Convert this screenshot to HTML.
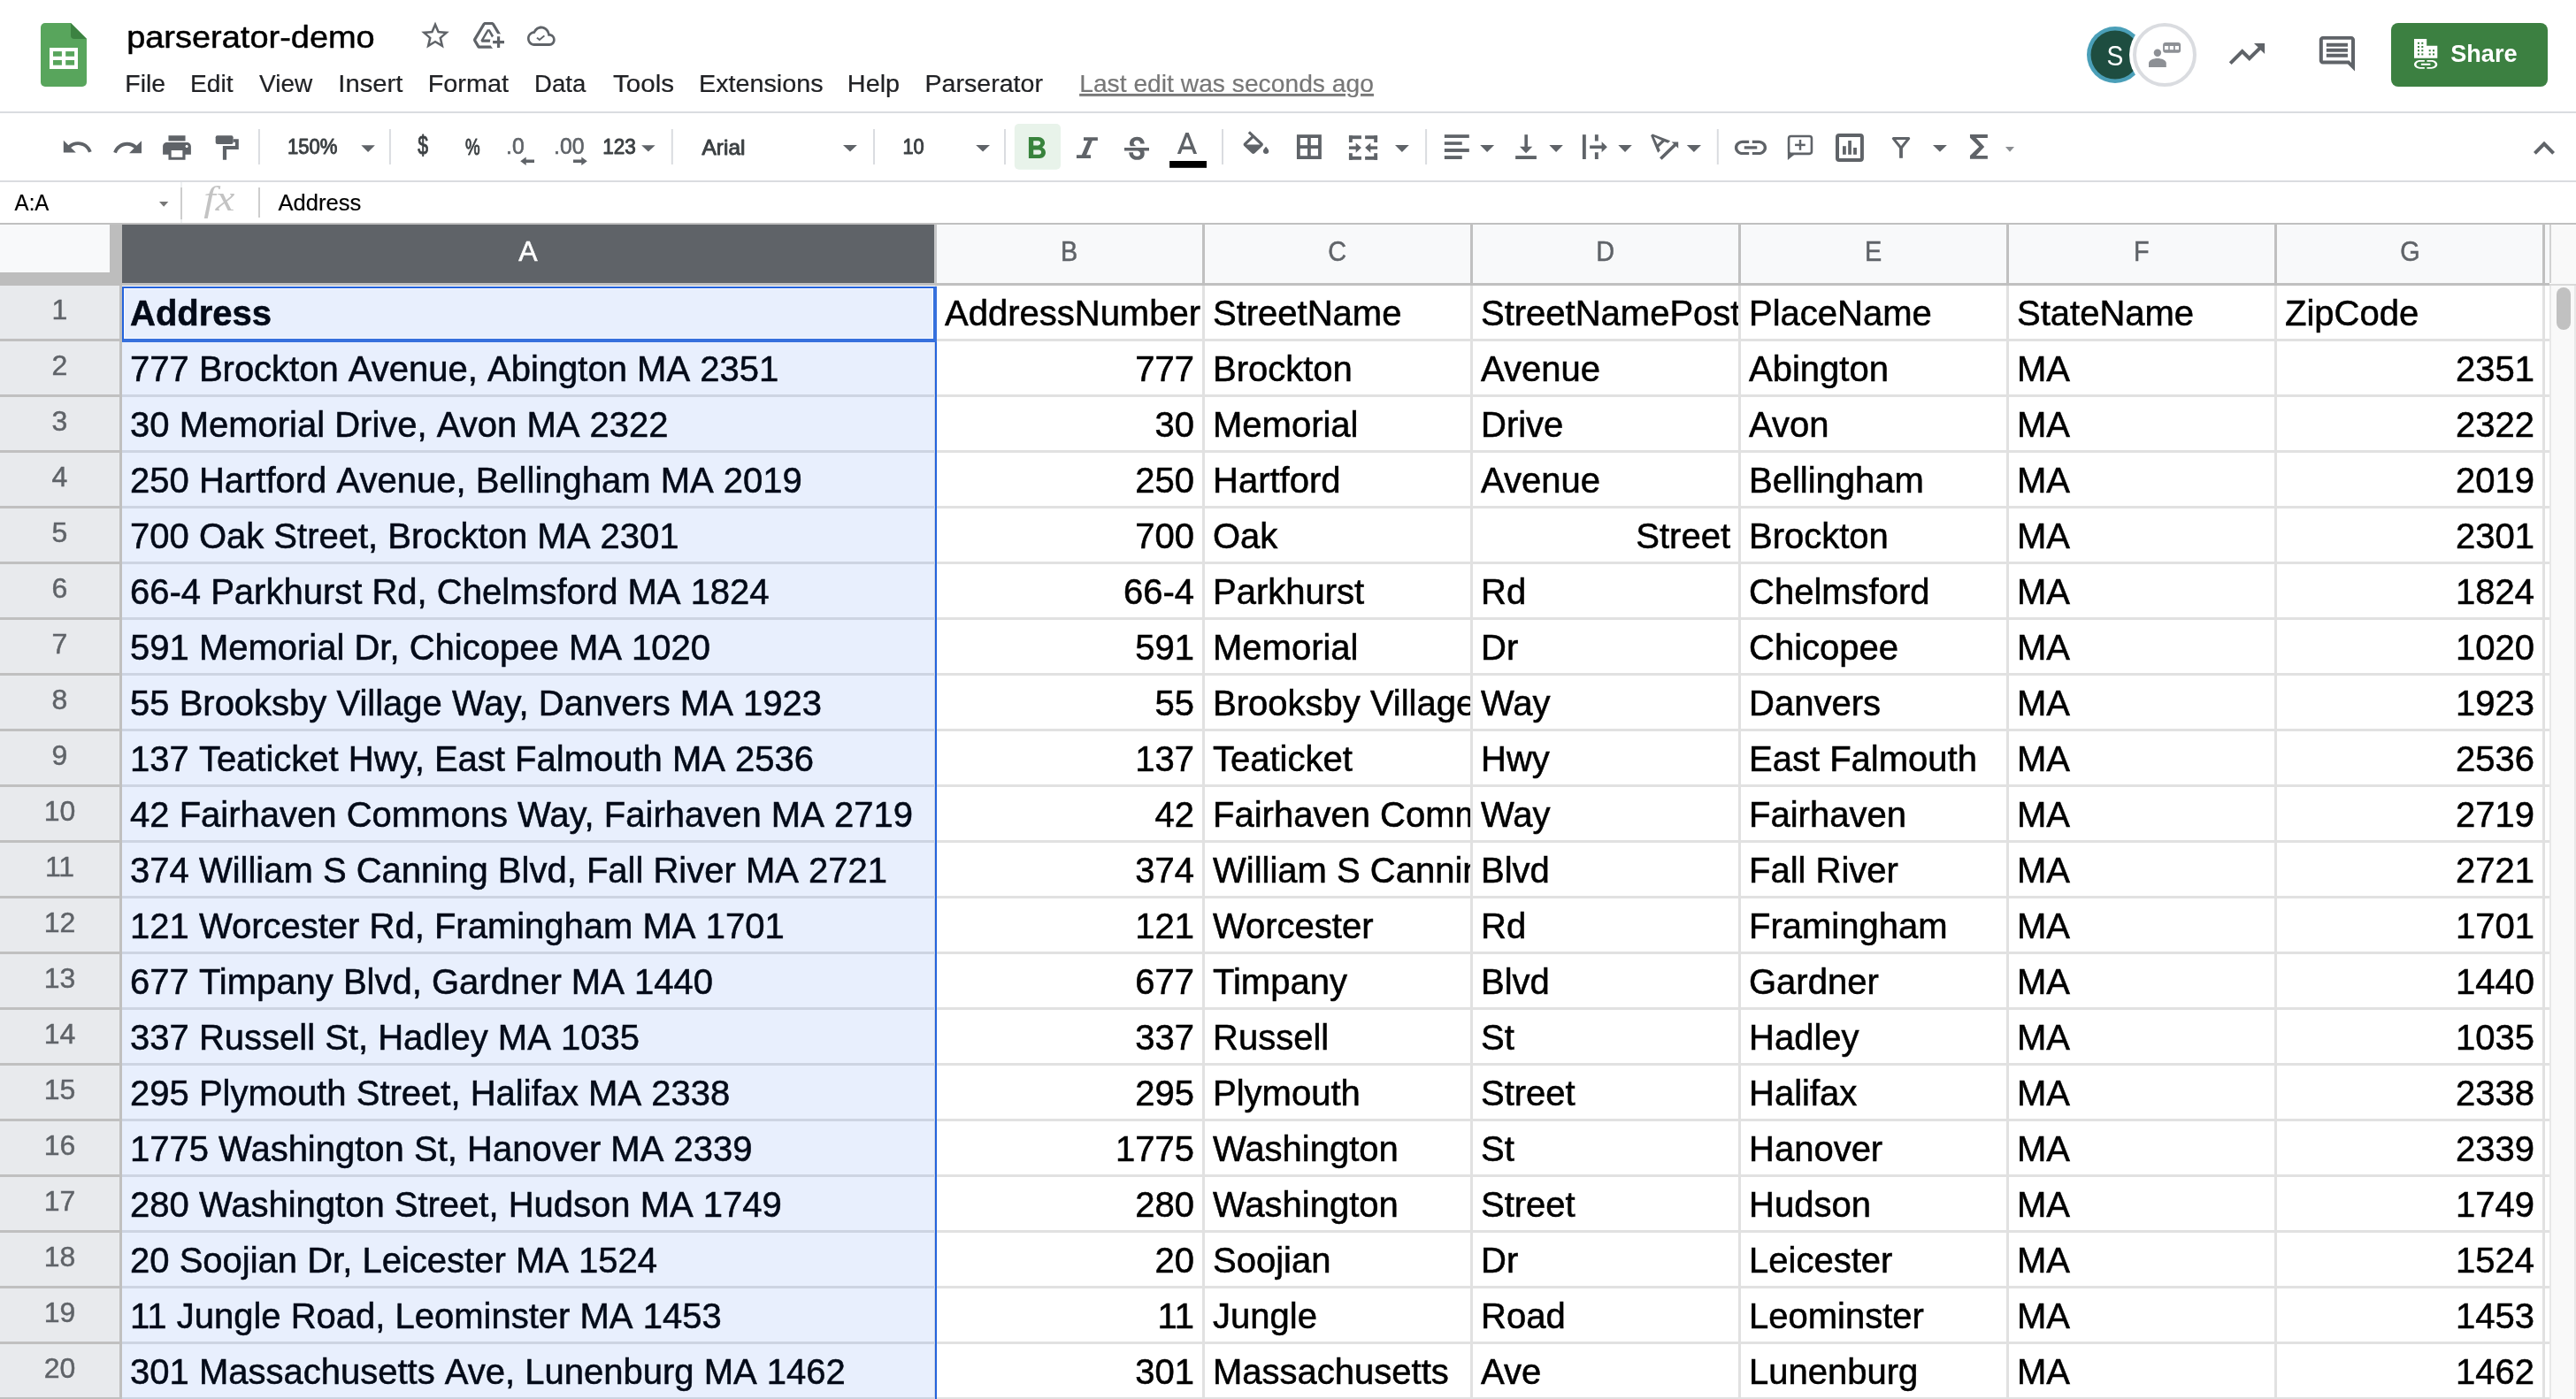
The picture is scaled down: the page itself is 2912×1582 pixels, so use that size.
<!DOCTYPE html>
<html lang="en"><head><meta charset="utf-8"><title>parserator-demo - Google Sheets</title>
<style>
*{box-sizing:border-box;margin:0;padding:0}
html,body{width:2912px;height:1582px;overflow:hidden;background:#fff}
body{position:relative;font-family:"Liberation Sans", Arial, sans-serif;color:#000}
.abs,.c,.rh,.ch,.vl,.hl{position:absolute}
.c{-webkit-text-stroke:0.55px #000;height:63px;line-height:63px;font-size:40px;white-space:nowrap;overflow:hidden;padding:0 9px;color:#000}
.c.r{text-align:right}
.c i{font-kerning:none;font-style:normal}
.c.b{font-weight:bold}
.rh{-webkit-text-stroke:0.45px;left:0;width:135px;height:60px;background:#e8eaed;color:#5f6368;font-size:32px;text-align:center;line-height:55px}
.ch span{display:inline-block;transform:scaleX(.9)}
.ch{-webkit-text-stroke:0.5px;top:254px;height:66px;background:#f8f9fa;color:#5f6368;font-size:32px;text-align:center;line-height:61px}
.vl{width:3px;background:#e1e1e1}
.hl{height:3px;background:#e1e1e1}
#chrome{position:absolute;left:0;top:0;will-change:transform}
#grid{position:absolute;left:0;top:0;width:2912px;height:1582px;will-change:transform}
</style></head><body>
<div id="grid">
<div class="abs" style="left:0;top:252px;width:2912px;height:2px;background:#c0c0c0"></div>
<div class="ch" style="left:138px;width:918px;background:#5f6368;color:#fff;">A</div>
<div class="abs" style="left:1056px;top:254px;width:3px;height:69px;background:#c6c7c9"></div>
<div class="ch" style="left:1059px;width:300px;"><span>B</span></div>
<div class="abs" style="left:1359px;top:254px;width:3px;height:69px;background:#c0c0c0"></div>
<div class="ch" style="left:1362px;width:300px;"><span>C</span></div>
<div class="abs" style="left:1662px;top:254px;width:3px;height:69px;background:#c0c0c0"></div>
<div class="ch" style="left:1665px;width:300px;"><span>D</span></div>
<div class="abs" style="left:1965px;top:254px;width:3px;height:69px;background:#c0c0c0"></div>
<div class="ch" style="left:1968px;width:300px;"><span>E</span></div>
<div class="abs" style="left:2268px;top:254px;width:3px;height:69px;background:#c0c0c0"></div>
<div class="ch" style="left:2271px;width:300px;"><span>F</span></div>
<div class="abs" style="left:2571px;top:254px;width:3px;height:69px;background:#c0c0c0"></div>
<div class="ch" style="left:2574px;width:300px;"><span>G</span></div>
<div class="abs" style="left:2874px;top:254px;width:3px;height:69px;background:#c0c0c0"></div>
<div class="abs" style="left:2877px;top:254px;width:5px;height:66px;background:#f8f9fa"></div>
<div class="abs" style="left:0;top:320px;width:2882px;height:3px;background:#c0c0c0"></div>
<div class="abs" style="left:0;top:254px;width:138px;height:69px;background:#bdbdbd"></div>
<div class="abs" style="left:0;top:254px;width:124px;height:54px;background:#f8f9fa"></div>
<div class="rh" style="top:323px">1</div>
<div class="abs" style="left:0;top:383px;width:135px;height:3px;background:#c0c0c0"></div>
<div class="rh" style="top:386px">2</div>
<div class="abs" style="left:0;top:446px;width:135px;height:3px;background:#c0c0c0"></div>
<div class="rh" style="top:449px">3</div>
<div class="abs" style="left:0;top:509px;width:135px;height:3px;background:#c0c0c0"></div>
<div class="rh" style="top:512px">4</div>
<div class="abs" style="left:0;top:572px;width:135px;height:3px;background:#c0c0c0"></div>
<div class="rh" style="top:575px">5</div>
<div class="abs" style="left:0;top:635px;width:135px;height:3px;background:#c0c0c0"></div>
<div class="rh" style="top:638px">6</div>
<div class="abs" style="left:0;top:698px;width:135px;height:3px;background:#c0c0c0"></div>
<div class="rh" style="top:701px">7</div>
<div class="abs" style="left:0;top:761px;width:135px;height:3px;background:#c0c0c0"></div>
<div class="rh" style="top:764px">8</div>
<div class="abs" style="left:0;top:824px;width:135px;height:3px;background:#c0c0c0"></div>
<div class="rh" style="top:827px">9</div>
<div class="abs" style="left:0;top:887px;width:135px;height:3px;background:#c0c0c0"></div>
<div class="rh" style="top:890px">10</div>
<div class="abs" style="left:0;top:950px;width:135px;height:3px;background:#c0c0c0"></div>
<div class="rh" style="top:953px">11</div>
<div class="abs" style="left:0;top:1013px;width:135px;height:3px;background:#c0c0c0"></div>
<div class="rh" style="top:1016px">12</div>
<div class="abs" style="left:0;top:1076px;width:135px;height:3px;background:#c0c0c0"></div>
<div class="rh" style="top:1079px">13</div>
<div class="abs" style="left:0;top:1139px;width:135px;height:3px;background:#c0c0c0"></div>
<div class="rh" style="top:1142px">14</div>
<div class="abs" style="left:0;top:1202px;width:135px;height:3px;background:#c0c0c0"></div>
<div class="rh" style="top:1205px">15</div>
<div class="abs" style="left:0;top:1265px;width:135px;height:3px;background:#c0c0c0"></div>
<div class="rh" style="top:1268px">16</div>
<div class="abs" style="left:0;top:1328px;width:135px;height:3px;background:#c0c0c0"></div>
<div class="rh" style="top:1331px">17</div>
<div class="abs" style="left:0;top:1391px;width:135px;height:3px;background:#c0c0c0"></div>
<div class="rh" style="top:1394px">18</div>
<div class="abs" style="left:0;top:1454px;width:135px;height:3px;background:#c0c0c0"></div>
<div class="rh" style="top:1457px">19</div>
<div class="abs" style="left:0;top:1517px;width:135px;height:3px;background:#c0c0c0"></div>
<div class="rh" style="top:1520px">20</div>
<div class="abs" style="left:0;top:1580px;width:135px;height:3px;background:#c0c0c0"></div>
<div class="abs" style="left:135px;top:323px;width:3px;height:1259px;background:#c0c0c0"></div>
<div class="hl" style="left:138px;top:383px;width:2744px"></div>
<div class="hl" style="left:138px;top:446px;width:2744px"></div>
<div class="hl" style="left:138px;top:509px;width:2744px"></div>
<div class="hl" style="left:138px;top:572px;width:2744px"></div>
<div class="hl" style="left:138px;top:635px;width:2744px"></div>
<div class="hl" style="left:138px;top:698px;width:2744px"></div>
<div class="hl" style="left:138px;top:761px;width:2744px"></div>
<div class="hl" style="left:138px;top:824px;width:2744px"></div>
<div class="hl" style="left:138px;top:887px;width:2744px"></div>
<div class="hl" style="left:138px;top:950px;width:2744px"></div>
<div class="hl" style="left:138px;top:1013px;width:2744px"></div>
<div class="hl" style="left:138px;top:1076px;width:2744px"></div>
<div class="hl" style="left:138px;top:1139px;width:2744px"></div>
<div class="hl" style="left:138px;top:1202px;width:2744px"></div>
<div class="hl" style="left:138px;top:1265px;width:2744px"></div>
<div class="hl" style="left:138px;top:1328px;width:2744px"></div>
<div class="hl" style="left:138px;top:1391px;width:2744px"></div>
<div class="hl" style="left:138px;top:1454px;width:2744px"></div>
<div class="hl" style="left:138px;top:1517px;width:2744px"></div>
<div class="hl" style="left:138px;top:1580px;width:2744px"></div>
<div class="vl" style="left:1056px;top:323px;height:1259px"></div>
<div class="vl" style="left:1359px;top:323px;height:1259px"></div>
<div class="vl" style="left:1662px;top:323px;height:1259px"></div>
<div class="vl" style="left:1965px;top:323px;height:1259px"></div>
<div class="vl" style="left:2268px;top:323px;height:1259px"></div>
<div class="vl" style="left:2571px;top:323px;height:1259px"></div>
<div class="vl" style="left:2874px;top:323px;height:1259px"></div>
<div class="c b" style="left:138px;top:323px;width:918px">Address</div>
<div class="c" style="left:1059px;top:323px;width:300px">AddressNumber</div>
<div class="c" style="left:1362px;top:323px;width:300px">StreetName</div>
<div class="c" style="left:1665px;top:323px;width:300px">StreetNamePostType</div>
<div class="c" style="left:1968px;top:323px;width:300px">PlaceName</div>
<div class="c" style="left:2271px;top:323px;width:300px">StateName</div>
<div class="c" style="left:2574px;top:323px;width:300px">ZipCode</div>
<div class="c" style="left:138px;top:386px;width:918px">777<i> </i>Brockton<i> </i>Avenue,<i> </i>Abington<i> </i>MA<i> </i>2351</div>
<div class="c r" style="left:1059px;top:386px;width:300px">777</div>
<div class="c" style="left:1362px;top:386px;width:300px">Brockton</div>
<div class="c" style="left:1665px;top:386px;width:300px">Avenue</div>
<div class="c" style="left:1968px;top:386px;width:300px">Abington</div>
<div class="c" style="left:2271px;top:386px;width:300px">MA</div>
<div class="c r" style="left:2574px;top:386px;width:300px">2351</div>
<div class="c" style="left:138px;top:449px;width:918px">30<i> </i>Memorial<i> </i>Drive,<i> </i>Avon<i> </i>MA<i> </i>2322</div>
<div class="c r" style="left:1059px;top:449px;width:300px">30</div>
<div class="c" style="left:1362px;top:449px;width:300px">Memorial</div>
<div class="c" style="left:1665px;top:449px;width:300px">Drive</div>
<div class="c" style="left:1968px;top:449px;width:300px">Avon</div>
<div class="c" style="left:2271px;top:449px;width:300px">MA</div>
<div class="c r" style="left:2574px;top:449px;width:300px">2322</div>
<div class="c" style="left:138px;top:512px;width:918px">250<i> </i>Hartford<i> </i>Avenue,<i> </i>Bellingham<i> </i>MA<i> </i>2019</div>
<div class="c r" style="left:1059px;top:512px;width:300px">250</div>
<div class="c" style="left:1362px;top:512px;width:300px">Hartford</div>
<div class="c" style="left:1665px;top:512px;width:300px">Avenue</div>
<div class="c" style="left:1968px;top:512px;width:300px">Bellingham</div>
<div class="c" style="left:2271px;top:512px;width:300px">MA</div>
<div class="c r" style="left:2574px;top:512px;width:300px">2019</div>
<div class="c" style="left:138px;top:575px;width:918px">700<i> </i>Oak<i> </i>Street,<i> </i>Brockton<i> </i>MA<i> </i>2301</div>
<div class="c r" style="left:1059px;top:575px;width:300px">700</div>
<div class="c" style="left:1362px;top:575px;width:300px">Oak</div>
<div class="c r" style="left:1665px;top:575px;width:300px">Street</div>
<div class="c" style="left:1968px;top:575px;width:300px">Brockton</div>
<div class="c" style="left:2271px;top:575px;width:300px">MA</div>
<div class="c r" style="left:2574px;top:575px;width:300px">2301</div>
<div class="c" style="left:138px;top:638px;width:918px">66-4<i> </i>Parkhurst<i> </i>Rd,<i> </i>Chelmsford<i> </i>MA<i> </i>1824</div>
<div class="c r" style="left:1059px;top:638px;width:300px">66-4</div>
<div class="c" style="left:1362px;top:638px;width:300px">Parkhurst</div>
<div class="c" style="left:1665px;top:638px;width:300px">Rd</div>
<div class="c" style="left:1968px;top:638px;width:300px">Chelmsford</div>
<div class="c" style="left:2271px;top:638px;width:300px">MA</div>
<div class="c r" style="left:2574px;top:638px;width:300px">1824</div>
<div class="c" style="left:138px;top:701px;width:918px">591<i> </i>Memorial<i> </i>Dr,<i> </i>Chicopee<i> </i>MA<i> </i>1020</div>
<div class="c r" style="left:1059px;top:701px;width:300px">591</div>
<div class="c" style="left:1362px;top:701px;width:300px">Memorial</div>
<div class="c" style="left:1665px;top:701px;width:300px">Dr</div>
<div class="c" style="left:1968px;top:701px;width:300px">Chicopee</div>
<div class="c" style="left:2271px;top:701px;width:300px">MA</div>
<div class="c r" style="left:2574px;top:701px;width:300px">1020</div>
<div class="c" style="left:138px;top:764px;width:918px">55<i> </i>Brooksby<i> </i>Village<i> </i>Way,<i> </i>Danvers<i> </i>MA<i> </i>1923</div>
<div class="c r" style="left:1059px;top:764px;width:300px">55</div>
<div class="c" style="left:1362px;top:764px;width:300px">Brooksby<i> </i>Village</div>
<div class="c" style="left:1665px;top:764px;width:300px">Way</div>
<div class="c" style="left:1968px;top:764px;width:300px">Danvers</div>
<div class="c" style="left:2271px;top:764px;width:300px">MA</div>
<div class="c r" style="left:2574px;top:764px;width:300px">1923</div>
<div class="c" style="left:138px;top:827px;width:918px">137<i> </i>Teaticket<i> </i>Hwy,<i> </i>East<i> </i>Falmouth<i> </i>MA<i> </i>2536</div>
<div class="c r" style="left:1059px;top:827px;width:300px">137</div>
<div class="c" style="left:1362px;top:827px;width:300px">Teaticket</div>
<div class="c" style="left:1665px;top:827px;width:300px">Hwy</div>
<div class="c" style="left:1968px;top:827px;width:300px">East<i> </i>Falmouth</div>
<div class="c" style="left:2271px;top:827px;width:300px">MA</div>
<div class="c r" style="left:2574px;top:827px;width:300px">2536</div>
<div class="c" style="left:138px;top:890px;width:918px">42<i> </i>Fairhaven<i> </i>Commons<i> </i>Way,<i> </i>Fairhaven<i> </i>MA<i> </i>2719</div>
<div class="c r" style="left:1059px;top:890px;width:300px">42</div>
<div class="c" style="left:1362px;top:890px;width:300px">Fairhaven<i> </i>Commons</div>
<div class="c" style="left:1665px;top:890px;width:300px">Way</div>
<div class="c" style="left:1968px;top:890px;width:300px">Fairhaven</div>
<div class="c" style="left:2271px;top:890px;width:300px">MA</div>
<div class="c r" style="left:2574px;top:890px;width:300px">2719</div>
<div class="c" style="left:138px;top:953px;width:918px">374<i> </i>William<i> </i>S<i> </i>Canning<i> </i>Blvd,<i> </i>Fall<i> </i>River<i> </i>MA<i> </i>2721</div>
<div class="c r" style="left:1059px;top:953px;width:300px">374</div>
<div class="c" style="left:1362px;top:953px;width:300px">William<i> </i>S<i> </i>Canning</div>
<div class="c" style="left:1665px;top:953px;width:300px">Blvd</div>
<div class="c" style="left:1968px;top:953px;width:300px">Fall<i> </i>River</div>
<div class="c" style="left:2271px;top:953px;width:300px">MA</div>
<div class="c r" style="left:2574px;top:953px;width:300px">2721</div>
<div class="c" style="left:138px;top:1016px;width:918px">121<i> </i>Worcester<i> </i>Rd,<i> </i>Framingham<i> </i>MA<i> </i>1701</div>
<div class="c r" style="left:1059px;top:1016px;width:300px">121</div>
<div class="c" style="left:1362px;top:1016px;width:300px">Worcester</div>
<div class="c" style="left:1665px;top:1016px;width:300px">Rd</div>
<div class="c" style="left:1968px;top:1016px;width:300px">Framingham</div>
<div class="c" style="left:2271px;top:1016px;width:300px">MA</div>
<div class="c r" style="left:2574px;top:1016px;width:300px">1701</div>
<div class="c" style="left:138px;top:1079px;width:918px">677<i> </i>Timpany<i> </i>Blvd,<i> </i>Gardner<i> </i>MA<i> </i>1440</div>
<div class="c r" style="left:1059px;top:1079px;width:300px">677</div>
<div class="c" style="left:1362px;top:1079px;width:300px">Timpany</div>
<div class="c" style="left:1665px;top:1079px;width:300px">Blvd</div>
<div class="c" style="left:1968px;top:1079px;width:300px">Gardner</div>
<div class="c" style="left:2271px;top:1079px;width:300px">MA</div>
<div class="c r" style="left:2574px;top:1079px;width:300px">1440</div>
<div class="c" style="left:138px;top:1142px;width:918px">337<i> </i>Russell<i> </i>St,<i> </i>Hadley<i> </i>MA<i> </i>1035</div>
<div class="c r" style="left:1059px;top:1142px;width:300px">337</div>
<div class="c" style="left:1362px;top:1142px;width:300px">Russell</div>
<div class="c" style="left:1665px;top:1142px;width:300px">St</div>
<div class="c" style="left:1968px;top:1142px;width:300px">Hadley</div>
<div class="c" style="left:2271px;top:1142px;width:300px">MA</div>
<div class="c r" style="left:2574px;top:1142px;width:300px">1035</div>
<div class="c" style="left:138px;top:1205px;width:918px">295<i> </i>Plymouth<i> </i>Street,<i> </i>Halifax<i> </i>MA<i> </i>2338</div>
<div class="c r" style="left:1059px;top:1205px;width:300px">295</div>
<div class="c" style="left:1362px;top:1205px;width:300px">Plymouth</div>
<div class="c" style="left:1665px;top:1205px;width:300px">Street</div>
<div class="c" style="left:1968px;top:1205px;width:300px">Halifax</div>
<div class="c" style="left:2271px;top:1205px;width:300px">MA</div>
<div class="c r" style="left:2574px;top:1205px;width:300px">2338</div>
<div class="c" style="left:138px;top:1268px;width:918px">1775<i> </i>Washington<i> </i>St,<i> </i>Hanover<i> </i>MA<i> </i>2339</div>
<div class="c r" style="left:1059px;top:1268px;width:300px">1775</div>
<div class="c" style="left:1362px;top:1268px;width:300px">Washington</div>
<div class="c" style="left:1665px;top:1268px;width:300px">St</div>
<div class="c" style="left:1968px;top:1268px;width:300px">Hanover</div>
<div class="c" style="left:2271px;top:1268px;width:300px">MA</div>
<div class="c r" style="left:2574px;top:1268px;width:300px">2339</div>
<div class="c" style="left:138px;top:1331px;width:918px">280<i> </i>Washington<i> </i>Street,<i> </i>Hudson<i> </i>MA<i> </i>1749</div>
<div class="c r" style="left:1059px;top:1331px;width:300px">280</div>
<div class="c" style="left:1362px;top:1331px;width:300px">Washington</div>
<div class="c" style="left:1665px;top:1331px;width:300px">Street</div>
<div class="c" style="left:1968px;top:1331px;width:300px">Hudson</div>
<div class="c" style="left:2271px;top:1331px;width:300px">MA</div>
<div class="c r" style="left:2574px;top:1331px;width:300px">1749</div>
<div class="c" style="left:138px;top:1394px;width:918px">20<i> </i>Soojian<i> </i>Dr,<i> </i>Leicester<i> </i>MA<i> </i>1524</div>
<div class="c r" style="left:1059px;top:1394px;width:300px">20</div>
<div class="c" style="left:1362px;top:1394px;width:300px">Soojian</div>
<div class="c" style="left:1665px;top:1394px;width:300px">Dr</div>
<div class="c" style="left:1968px;top:1394px;width:300px">Leicester</div>
<div class="c" style="left:2271px;top:1394px;width:300px">MA</div>
<div class="c r" style="left:2574px;top:1394px;width:300px">1524</div>
<div class="c" style="left:138px;top:1457px;width:918px">11<i> </i>Jungle<i> </i>Road,<i> </i>Leominster<i> </i>MA<i> </i>1453</div>
<div class="c r" style="left:1059px;top:1457px;width:300px">11</div>
<div class="c" style="left:1362px;top:1457px;width:300px">Jungle</div>
<div class="c" style="left:1665px;top:1457px;width:300px">Road</div>
<div class="c" style="left:1968px;top:1457px;width:300px">Leominster</div>
<div class="c" style="left:2271px;top:1457px;width:300px">MA</div>
<div class="c r" style="left:2574px;top:1457px;width:300px">1453</div>
<div class="c" style="left:138px;top:1520px;width:918px">301<i> </i>Massachusetts<i> </i>Ave,<i> </i>Lunenburg<i> </i>MA<i> </i>1462</div>
<div class="c r" style="left:1059px;top:1520px;width:300px">301</div>
<div class="c" style="left:1362px;top:1520px;width:300px">Massachusetts</div>
<div class="c" style="left:1665px;top:1520px;width:300px">Ave</div>
<div class="c" style="left:1968px;top:1520px;width:300px">Lunenburg</div>
<div class="c" style="left:2271px;top:1520px;width:300px">MA</div>
<div class="c r" style="left:2574px;top:1520px;width:300px">1462</div>
<div class="abs" style="left:138px;top:323px;width:919px;height:1259px;background:rgba(25,95,235,0.1)"></div>
<div class="abs" style="left:1057px;top:324px;width:2px;height:1259px;background:#2463dc"></div>
<div class="abs" style="left:138px;top:324px;width:921px;height:63px;border:2px solid #2463dc;border-right-width:4px;border-bottom-width:4px;border-right-color:#3670dd;border-bottom-color:#3670dd;box-shadow:inset 0 0 0 1px rgba(255,255,255,.75)"></div>
<div class="abs" style="left:138px;top:323px;width:919px;height:1px;background:#fff"></div>
<div class="abs" style="left:2882px;top:254px;width:2px;height:66px;background:#d2d2d2"></div>
<div class="abs" style="left:2884px;top:254px;width:28px;height:67px;background:#f9f9f9"></div>
<div class="abs" style="left:2882px;top:321px;width:30px;height:2px;background:#d9d9d9"></div>
<div class="abs" style="left:2882px;top:323px;width:2px;height:1259px;background:#e8e8e8"></div>
<div class="abs" style="left:2884px;top:323px;width:26px;height:1259px;background:#f9f9f9"></div>
<div class="abs" style="left:2910px;top:323px;width:2px;height:1259px;background:#e8e8e8"></div>
<div class="abs" style="left:2890px;top:325px;width:16px;height:48px;border-radius:8px;background:#c1c1c1"></div>
</div>
<svg id="chrome" width="2912" height="252" viewBox="0 0 2912 252">
<rect x="0.00" y="0.00" width="2912.00" height="252.00" fill="#fff"/>
<rect x="0.00" y="126.00" width="2912.00" height="2.00" fill="#dadce0"/>
<rect x="0.00" y="204.00" width="2912.00" height="2.00" fill="#dadce0"/>
<g>
<path d="M51 26H80L98 44V93a5 5 0 0 1-5 5H51a5 5 0 0 1-5-5V31a5 5 0 0 1 5-5z" fill="#58a55c"/>
<path d="M80 26L98 44H84a4 4 0 0 1-4-4z" fill="#3c8241"/>
<rect x="56.00" y="54.00" width="32.00" height="24.00" fill="#fff"/>
<rect x="60.00" y="58.10" width="9.90" height="5.70" fill="#58a55c"/>
<rect x="60.00" y="68.00" width="9.90" height="5.70" fill="#58a55c"/>
<rect x="74.20" y="58.10" width="9.90" height="5.70" fill="#58a55c"/>
<rect x="74.20" y="68.00" width="9.90" height="5.70" fill="#58a55c"/>
</g>
<path transform="translate(473.040,21.232) scale(1.5800,1.5842)" fill="#5f6368" d="M22 9.24l-7.19-.62L12 2 9.19 8.63 2 9.24l5.46 4.73L5.82 21 12 17.27 18.18 21l-1.63-7.03L22 9.24zM12 15.4l-3.76 2.27 1-4.28-3.32-2.88 4.38-.38L12 6.1l1.71 4.04 4.38.38-3.32 2.88 1 4.28L12 15.4z" />
<path transform="translate(532.903,20.979) scale(1.6129,1.5684)" fill="#5f6368" d="M20 21v-3h3v-2h-3v-3h-2v3h-3v2h3v3h2zm-4.97.5H5.66c-.72 0-1.38-.38-1.73-1L1.57 16.4c-.36-.62-.35-1.38.01-2L7.92 3.49c.36-.61 1.02-.99 1.73-.99h4.7c.71 0 1.37.38 1.73.99l4.48 7.71c-.5-.13-1.02-.2-1.56-.2-.28 0-.56.02-.84.06L14.35 4.5h-4.7L3.31 15.41l2.35 4.09h7.89c.35.77.85 1.45 1.48 2zM13.34 15c-.22.63-.34 1.3-.34 2H7.25l-.73-1.27 4.58-7.98h1.8l2.74 4.77c-.5.36-.95.79-1.33 1.28L12 9.25 8.7 15h4.64z" />
<path transform="translate(596.000,24.025) scale(1.3208,1.3937)" fill="#5f6368" d="M19.35 10.04C18.67 6.59 15.64 4 12 4 9.11 4 6.6 5.64 5.35 8.04 2.34 8.36 0 10.91 0 14c0 3.31 2.69 6 6 6h13c2.76 0 5-2.24 5-5 0-2.64-2.05-4.78-4.65-4.96zM19 18H6c-2.21 0-4-1.79-4-4 0-2.05 1.53-3.76 3.56-3.97l1.07-.11.5-.95C8.08 7.14 9.94 6 12 6c2.62 0 4.88 1.86 5.39 4.43l.3 1.5 1.53.11c1.56.1 2.78 1.41 2.78 2.96 0 1.65-1.35 3-3 3z" />
<path transform="translate(599.602,31.408) scale(1.0305,0.8760)" fill="#5f6368" d="M10 14.18L7.91 12.09 6.5 13.5 10 17l6.01-6.01-1.41-1.41z" />
<path transform="translate(68.683,148.016) scale(1.5584,1.5263)" fill="#5f6368" d="M12.5 8c-2.65 0-5.05.99-6.9 2.6L2 7v9h9l-3.62-3.62c1.39-1.16 3.16-1.88 5.12-1.88 3.54 0 6.55 2.31 7.6 5.5l2.37-.78C21.08 11.03 17.15 8 12.5 8z" />
<path transform="translate(125.806,148.311) scale(1.5543,1.5556)" fill="#5f6368" d="M18.4 10.6C16.55 8.99 14.15 8 11.5 8c-4.65 0-8.58 3.03-9.96 7.22L3.9 16c1.05-3.19 4.05-5.5 7.6-5.5 1.95 0 3.73.72 5.12 1.88L13 16h9V7l-3.6 3.6z" />
<path transform="translate(180.920,148.717) scale(1.5900,1.5278)" fill="#5f6368" d="M19 8H5c-1.66 0-3 1.34-3 3v6h4v4h12v-4h4v-6c0-1.66-1.34-3-3-3zm-3 11H8v-5h8v5zm3-7c-.55 0-1-.45-1-1s.45-1 1-1 1 .45 1 1-.45 1-1 1zm-1-9H6v4h12V3z" />
<g fill="#5f6368">
<rect x="243.70" y="153.30" width="19.90" height="9.70" fill="#5f6368" rx="2"/>
<path d="M263.600 157.200H269.800V169H256.100V180.800H251.900V165H265.900V160.800H263.600z"/>
</g>
<rect x="291.90" y="146.00" width="2.00" height="40.00" fill="#dadce0"/>
<rect x="439.90" y="146.00" width="2.00" height="40.00" fill="#dadce0"/>
<rect x="758.80" y="146.00" width="2.00" height="40.00" fill="#dadce0"/>
<rect x="987.00" y="146.00" width="2.00" height="40.00" fill="#dadce0"/>
<rect x="1135.00" y="146.00" width="2.00" height="40.00" fill="#dadce0"/>
<rect x="1381.00" y="146.00" width="2.00" height="40.00" fill="#dadce0"/>
<rect x="1611.10" y="146.00" width="2.00" height="40.00" fill="#dadce0"/>
<rect x="1940.80" y="146.00" width="2.00" height="40.00" fill="#dadce0"/>
<path d="M408.30 164.20H423.90L416.10 171.90z" fill="#5f6368"/>
<path d="M588.200 182.250L594.700 177.400V180.500H604V184H594.700V187.100z" fill="#5f6368"/>
<path d="M663.800 182.250L657.300 177.400V180.500H648V184H657.300V187.100z" fill="#5f6368"/>
<path d="M725.10 164.20H740.70L732.90 171.60z" fill="#5f6368"/>
<path d="M953.00 163.90H968.90L960.95 171.60z" fill="#5f6368"/>
<path d="M1103.20 163.90H1119.00L1111.10 171.60z" fill="#5f6368"/>
<rect x="1146.80" y="140.10" width="52.20" height="51.70" fill="#e8f3ea" rx="5"/>
<path transform="translate(1150.463,148.143) scale(1.7767,1.7143)" fill="#38833c" d="M15.6 10.79c.97-.67 1.65-1.77 1.65-2.79 0-2.26-1.75-4-4-4H7v14h7.04c2.09 0 3.71-1.7 3.71-3.79 0-1.52-.86-2.82-2.15-3.42zM10 6.5h3c.83 0 1.5.67 1.5 1.5s-.67 1.5-1.5 1.5h-3v-3zm3.500 9H10v-3h3.500c.83 0 1.500.67 1.500 1.500s-.67 1.500-1.500 1.500z" />
<path fill="#5f6368" d="M1225.00 155.18L1240.89 155.18L1240.89 158.93L1234.82 158.93L1228.12 175.27L1233.04 175.27L1233.04 179.02L1216.96 179.02L1216.96 175.27L1222.77 175.27L1229.91 158.93L1225.00 158.93z"/>
<path transform="translate(1266.333,149.469) scale(1.5556,1.7438)" fill="#5f6368" d="M7.24 8.75c-.26-.48-.39-1.03-.39-1.67 0-.61.13-1.16.4-1.67.26-.5.63-.93 1.11-1.29.48-.35 1.05-.63 1.7-.83.66-.19 1.39-.29 2.18-.29.81 0 1.54.11 2.21.34.66.22 1.23.54 1.69.94.47.4.83.88 1.08 1.43.25.55.38 1.15.38 1.81h-3.01c0-.31-.05-.59-.15-.85-.09-.27-.24-.49-.44-.68-.2-.19-.45-.33-.75-.44-.3-.1-.66-.16-1.06-.16-.39 0-.74.04-1.03.13-.29.09-.53.21-.72.36-.19.16-.34.34-.44.55-.1.21-.15.43-.15.66 0 .48.25.88.74 1.21.38.25.77.48 1.41.7H7.39c-.05-.08-.11-.17-.15-.25zM21 12v-2H3v2h9.62c.18.07.4.14.55.2.37.17.66.34.87.51.21.17.35.36.43.57.07.2.11.43.11.69 0 .23-.05.45-.14.66-.09.2-.23.38-.42.53-.19.15-.42.26-.71.35-.29.08-.63.13-1.01.13-.43 0-.83-.04-1.18-.13s-.66-.23-.91-.42c-.25-.19-.45-.44-.59-.75-.14-.31-.25-.76-.25-1.21H6.4c0 .55.08 1.13.24 1.58.16.45.37.85.65 1.21.28.35.6.66.98.92.37.26.78.48 1.22.65.44.17.9.3 1.38.39.48.08.96.13 1.44.13.8 0 1.53-.09 2.18-.28s1.21-.45 1.67-.79c.46-.34.82-.77 1.07-1.27s.38-1.07.38-1.71c0-.6-.1-1.14-.31-1.61-.05-.11-.11-.23-.17-.33H21z" />
<path transform="translate(1321.365,144.836) scale(1.7154,1.7214)" fill="#5f6368" d="M11 3L5.5 17h2.25l1.120-3h6.250l1.120 3h2.250L13 3h-2zm-1.380 9L12 5.670 14.380 12H9.620z" />
<rect x="1322.10" y="182.00" width="41.90" height="7.80" fill="#000"/>
<path transform="translate(1400.817,148.300) scale(1.5944,1.5118)" fill="#5f6368" d="M16.56 8.94L7.62 0 6.21 1.41l2.38 2.38-5.15 5.15c-.59.59-.59 1.54 0 2.120l5.500 5.500c.29.29.68.44 1.060.44s.77-.15 1.060-.44l5.500-5.500c.59-.58.59-1.530 0-2.120zM5.210 10L10 5.210 14.790 10H5.210zM19 11.500s-2 2.170-2 3.500c0 1.100.9 2 2 2s2-.9 2-2c0-1.330-2-3.500-2-3.500z" />
<rect x="1467.850" y="154.100" width="24.100" height="24" fill="none" stroke="#5f6368" stroke-width="3.800"/>
<rect x="1478.00" y="154.00" width="3.80" height="24.00" fill="#5f6368"/>
<rect x="1467.00" y="164.20" width="25.00" height="3.80" fill="#5f6368"/>
<rect x="1524.94" y="153.29" width="13.98" height="3.88" fill="#5f6368"/>
<rect x="1524.94" y="153.29" width="3.88" height="7.76" fill="#5f6368"/>
<rect x="1543.11" y="153.29" width="13.98" height="3.88" fill="#5f6368"/>
<rect x="1553.20" y="153.29" width="3.88" height="7.76" fill="#5f6368"/>
<rect x="1524.94" y="173.17" width="3.88" height="7.61" fill="#5f6368"/>
<rect x="1524.94" y="176.89" width="13.98" height="3.88" fill="#5f6368"/>
<rect x="1553.20" y="173.17" width="3.88" height="7.61" fill="#5f6368"/>
<rect x="1543.11" y="176.89" width="13.98" height="3.88" fill="#5f6368"/>
<rect x="1524.94" y="165.40" width="10.09" height="3.42" fill="#5f6368"/>
<rect x="1547.14" y="165.40" width="9.94" height="3.42" fill="#5f6368"/>
<path fill="#5f6368" d="M1532.70 161.52L1538.91 167.11L1532.70 172.70z"/>
<path fill="#5f6368" d="M1549.32 161.52L1543.11 167.11L1549.32 172.70z"/>
<path d="M1577.00 163.90H1592.80L1584.90 171.90z" fill="#5f6368"/>
<rect x="1632.86" y="152.20" width="27.95" height="3.73" fill="#5f6368"/>
<rect x="1632.86" y="160.28" width="19.88" height="3.57" fill="#5f6368"/>
<rect x="1632.86" y="168.04" width="27.95" height="3.88" fill="#5f6368"/>
<rect x="1632.86" y="176.12" width="19.88" height="3.88" fill="#5f6368"/>
<path d="M1673.20 163.90H1689.10L1681.15 171.90z" fill="#5f6368"/>
<rect x="1723.39" y="152.20" width="3.57" height="15.84" fill="#5f6368"/>
<path fill="#5f6368" d="M1717.95 165.71L1732.24 165.71L1725.09 173.17z"/>
<rect x="1713.14" y="176.12" width="23.76" height="3.88" fill="#5f6368"/>
<path d="M1751.30 163.90H1766.90L1759.10 171.90z" fill="#5f6368"/>
<rect x="1788.91" y="152.20" width="3.88" height="27.80" fill="#5f6368"/>
<rect x="1802.89" y="152.20" width="3.88" height="7.30" fill="#5f6368"/>
<rect x="1802.89" y="172.24" width="3.88" height="7.76" fill="#5f6368"/>
<rect x="1797.14" y="164.47" width="15.84" height="3.57" fill="#5f6368"/>
<path fill="#5f6368" d="M1810.65 160.28L1816.86 166.18L1810.65 172.24z"/>
<path d="M1829.30 163.90H1844.80L1837.05 171.90z" fill="#5f6368"/>
<path transform="translate(1859.876,144.178) scale(1.8145,1.7391)" fill="#5f6368" d="M4.49 4.21L3.43 5.27 7.85 16.4l1.48-1.48-.92-2.19 3.54-3.54 2.19.92 1.48-1.48L4.49 4.21zm3.09 6.8L5.36 6.14l4.87 2.23-2.65 2.64zm12.99-1.68h-4.24l1.41 1.41-8.84 8.840L10.320 21l8.840-8.840 1.410 1.410V9.330z" />
<path d="M1906.80 164.10H1923.00L1914.90 171.90z" fill="#5f6368"/>
<path transform="translate(1957.280,147.390) scale(1.8100,1.6300)" fill="#5f6368" d="M3.9 12c0-1.71 1.39-3.1 3.1-3.1h4V7H7c-2.76 0-5 2.24-5 5s2.24 5 5 5h4v-1.900H7c-1.710 0-3.100-1.390-3.100-3.100zM8 13h8v-2H8v2zm9-6h-4v1.900h4c1.710 0 3.100 1.390 3.100 3.100s-1.390 3.100-3.100 3.100h-4V17h4c2.760 0 5-2.240 5-5s-2.240-5-5-5z" />
<rect x="2022.08" y="153.93" width="25.86" height="19.92" rx="2.500" fill="none" stroke="#5f6368" stroke-width="2.600"/>
<path fill="#5f6368" d="M2020.86 171.93L2028.20 175.07L2020.86 181.01z"/>
<rect x="2029.07" y="162.67" width="11.71" height="2.45" fill="#5f6368"/>
<rect x="2033.79" y="157.95" width="2.45" height="11.88" fill="#5f6368"/>
<rect x="2077" y="152.900" width="27.900" height="28.100" rx="2" fill="none" stroke="#5f6368" stroke-width="4"/>
<rect x="2083.00" y="165.20" width="3.80" height="9.60" fill="#5f6368"/>
<rect x="2089.20" y="159.00" width="3.70" height="15.80" fill="#5f6368"/>
<rect x="2095.10" y="167.00" width="3.80" height="7.80" fill="#5f6368"/>
<path d="M2140.30 156.60L2157.70 156.60L2149.00 167.50z" fill="none" stroke="#5f6368" stroke-width="3" stroke-linejoin="round"/>
<rect x="2147.10" y="166.00" width="3.80" height="12.80" fill="#5f6368"/>
<path d="M2185.00 163.90H2200.90L2192.95 171.70z" fill="#5f6368"/>
<path fill="#5f6368" d="M2226.96 151.88L2246.88 151.88L2246.88 155.89L2233.93 155.89L2243.21 165.89L2233.93 175.89L2246.88 175.89L2246.88 179.73L2226.96 179.73L2226.96 175.98L2237.23 165.89L2226.96 155.80z"/>
<path d="M2267.00 165.90H2277.00L2272.00 171.70z" fill="#8a8d91"/>
<path transform="translate(2852.000,143.398) scale(2.0000,2.0378)" fill="#5f6368" d="M12 8l-6 6 1.410 1.410L12 10.830l4.590 4.580L18 14z" />
<path d="M180.00 228.00H190.30L185.15 233.80z" fill="#777"/>
<rect x="204.00" y="206.00" width="2.00" height="46.00" fill="#eff1f2"/>
<rect x="204.00" y="212.00" width="2.00" height="36.00" fill="#cdcdcd"/>
<rect x="292.00" y="212.00" width="2.00" height="34.00" fill="#cdcdcd"/>
<circle cx="2391" cy="62" r="32" fill="#4a9fb8"/><circle cx="2391" cy="62" r="27.500" fill="#1e4d40"/>
<circle cx="2447" cy="62" r="40" fill="#fff"/><circle cx="2447" cy="62" r="34" fill="#fff" stroke="#dadce0" stroke-width="4"/>
<circle cx="2438.900" cy="59.800" r="4.200" fill="#8d9095"/>
<path d="M2429 75.900V71.500C2429 68 2434 65.900 2438.900 65.900S2448.800 68 2448.800 71.500V75.900z" fill="#8d9095"/>
<rect x="2445.10" y="48.00" width="20.00" height="11.80" fill="#8d9095" rx="3"/>
<rect x="2447.00" y="52.00" width="4.20" height="4.20" fill="#fff"/>
<rect x="2452.80" y="52.00" width="4.20" height="4.20" fill="#fff"/>
<rect x="2458.80" y="52.00" width="4.20" height="4.20" fill="#fff"/>
<path transform="translate(2515.770,36.800) scale(2.0150,2.0167)" fill="#5f6368" d="M16 6l2.290 2.290-4.880 4.880-4-4L2 16.590 3.410 18l6-6 4 4 6.300-6.290L22 12V6z" />
<path transform="translate(2617.780,36.940) scale(2.0100,1.9800)" fill="#5f6368" d="M21.990 4c0-1.100-.89-2-1.990-2H4c-1.100 0-2 .9-2 2v12c0 1.100.9 2 2 2h14l4 4-.010-18zM20 4v13.170L18.830 16H4V4h16zM6 12h12v2H6zm0-3h12v2H6zm0-3h12v2H6z" />
<rect x="2703.00" y="26.00" width="177.00" height="72.00" fill="#3c8041" rx="8"/>
<g fill="#fff">
<path d="M2729 44H2743.200V51.800H2755.300V65.700H2729z"/>
</g>
<rect x="2733.00" y="47.80" width="2.00" height="2.00" fill="#3c8041"/>
<rect x="2733.00" y="52.00" width="2.00" height="2.00" fill="#3c8041"/>
<rect x="2733.00" y="56.20" width="2.00" height="2.00" fill="#3c8041"/>
<rect x="2733.00" y="60.40" width="2.00" height="2.00" fill="#3c8041"/>
<rect x="2737.30" y="47.80" width="2.00" height="2.00" fill="#3c8041"/>
<rect x="2737.30" y="52.00" width="2.00" height="2.00" fill="#3c8041"/>
<rect x="2737.30" y="56.20" width="2.00" height="2.00" fill="#3c8041"/>
<rect x="2737.30" y="60.40" width="2.00" height="2.00" fill="#3c8041"/>
<rect x="2745.70" y="56.20" width="2.00" height="2.00" fill="#3c8041"/>
<rect x="2745.70" y="60.40" width="2.00" height="2.00" fill="#3c8041"/>
<rect x="2750.00" y="56.20" width="2.00" height="2.00" fill="#3c8041"/>
<rect x="2750.00" y="60.40" width="2.00" height="2.00" fill="#3c8041"/>
<path transform="translate(2726.370,60.970) scale(1.3150,0.9900)" fill="#fff" d="M3.9 12c0-1.71 1.39-3.1 3.1-3.1h4V7H7c-2.76 0-5 2.24-5 5s2.24 5 5 5h4v-1.900H7c-1.710 0-3.100-1.390-3.100-3.100zM8 13h8v-2H8v2zm9-6h-4v1.900h4c1.710 0 3.100 1.390 3.100 3.100s-1.390 3.100-3.100 3.100h-4V17h4c2.760 0 5-2.240 5-5s-2.240-5-5-5z" />
<text transform="translate(143.14,54) scale(1.0548,1)" font-family="'Liberation Sans', Arial, sans-serif" font-size="36" fill="#000" stroke="#000" stroke-width="0.5" stroke-linejoin="round">parserator-demo</text>
<text transform="translate(141.26,104) scale(1.0177,1)" font-family="'Liberation Sans', Arial, sans-serif" font-size="28" fill="#202124" stroke="#202124" stroke-width="0.2" stroke-linejoin="round">File</text>
<text transform="translate(215.09,104) scale(1.0050,1)" font-family="'Liberation Sans', Arial, sans-serif" font-size="28" fill="#202124" stroke="#202124" stroke-width="0.2" stroke-linejoin="round">Edit</text>
<text transform="translate(293.10,104) scale(1.0006,1)" font-family="'Liberation Sans', Arial, sans-serif" font-size="28" fill="#202124" stroke="#202124" stroke-width="0.2" stroke-linejoin="round">View</text>
<text transform="translate(382.31,104) scale(1.0433,1)" font-family="'Liberation Sans', Arial, sans-serif" font-size="28" fill="#202124" stroke="#202124" stroke-width="0.2" stroke-linejoin="round">Insert</text>
<text transform="translate(483.64,104) scale(1.0323,1)" font-family="'Liberation Sans', Arial, sans-serif" font-size="28" fill="#202124" stroke="#202124" stroke-width="0.2" stroke-linejoin="round">Format</text>
<text transform="translate(604.03,104) scale(0.9848,1)" font-family="'Liberation Sans', Arial, sans-serif" font-size="28" fill="#202124" stroke="#202124" stroke-width="0.2" stroke-linejoin="round">Data</text>
<text transform="translate(693.00,104) scale(1.0580,1)" font-family="'Liberation Sans', Arial, sans-serif" font-size="28" fill="#202124" stroke="#202124" stroke-width="0.2" stroke-linejoin="round">Tools</text>
<text transform="translate(789.95,104) scale(1.0271,1)" font-family="'Liberation Sans', Arial, sans-serif" font-size="28" fill="#202124" stroke="#202124" stroke-width="0.2" stroke-linejoin="round">Extensions</text>
<text transform="translate(957.84,104) scale(1.0288,1)" font-family="'Liberation Sans', Arial, sans-serif" font-size="28" fill="#202124" stroke="#202124" stroke-width="0.2" stroke-linejoin="round">Help</text>
<text transform="translate(1045.56,104) scale(1.0211,1)" font-family="'Liberation Sans', Arial, sans-serif" font-size="28" fill="#202124" stroke="#202124" stroke-width="0.2" stroke-linejoin="round">Parserator</text>
<text transform="translate(1220.18,104) scale(1.0088,1)" font-family="'Liberation Sans', Arial, sans-serif" font-size="28" fill="#777" stroke="#777" stroke-width="0.2" stroke-linejoin="round" text-decoration="underline">Last edit was seconds ago</text>
<text transform="translate(324.95,173.7) scale(0.9202,1)" font-family="'Liberation Sans', Arial, sans-serif" font-size="24" fill="#3c4043" stroke="#3c4043" stroke-width="0.95" stroke-linejoin="round">150%</text>
<text transform="translate(472.18,174.2) scale(0.7156,1)" font-family="'Liberation Sans', Arial, sans-serif" font-size="29.5" fill="#3c4043" stroke="#3c4043" stroke-width="0.95" stroke-linejoin="round">$</text>
<text transform="translate(526.08,174.6) scale(0.7341,1)" font-family="'Liberation Sans', Arial, sans-serif" font-size="25.5" fill="#3c4043" stroke="#3c4043" stroke-width="0.95" stroke-linejoin="round">%</text>
<text transform="translate(572.03,174.3) scale(0.9863,1)" font-family="'Liberation Sans', Arial, sans-serif" font-size="25" fill="#5f6368" stroke="#5f6368" stroke-width="0.6" stroke-linejoin="round">.0</text>
<text transform="translate(626.12,174.3) scale(0.9890,1)" font-family="'Liberation Sans', Arial, sans-serif" font-size="25" fill="#5f6368" stroke="#5f6368" stroke-width="0.6" stroke-linejoin="round">.00</text>
<text transform="translate(681.14,174.3) scale(0.9394,1)" font-family="'Liberation Sans', Arial, sans-serif" font-size="24" fill="#3c4043" stroke="#3c4043" stroke-width="0.95" stroke-linejoin="round">123</text>
<text transform="translate(793.58,174.7) scale(1.0165,1)" font-family="'Liberation Sans', Arial, sans-serif" font-size="24" fill="#3c4043" stroke="#3c4043" stroke-width="0.95" stroke-linejoin="round">Arial</text>
<text transform="translate(1020.47,174.3) scale(0.9094,1)" font-family="'Liberation Sans', Arial, sans-serif" font-size="24" fill="#3c4043" stroke="#3c4043" stroke-width="0.95" stroke-linejoin="round">10</text>
<text transform="translate(16.60,237.7) scale(0.9626,1)" font-family="'Liberation Sans', Arial, sans-serif" font-size="25" fill="#000" stroke="#000" stroke-width="0.2" stroke-linejoin="round">A:A</text>
<text transform="translate(314.50,237.7) scale(0.9834,1)" font-family="'Liberation Sans', Arial, sans-serif" font-size="26" fill="#000" stroke="#000" stroke-width="0.2" stroke-linejoin="round">Address</text>
<text transform="translate(230.30,237.5) scale(1.2159,1)" font-family="'Liberation Serif', 'DejaVu Serif', serif" font-size="40" fill="#c3c3c3" font-style="italic">fx</text>
<text transform="translate(2381.52,74.3) scale(0.8842,1)" font-family="'Liberation Sans', Arial, sans-serif" font-size="32" fill="#fff">S</text>
<text transform="translate(2770.20,69.6) scale(0.9864,1)" font-family="'Liberation Sans', Arial, sans-serif" font-size="27.5" fill="#fff" font-weight="bold">Share</text>
</svg>
</body></html>
